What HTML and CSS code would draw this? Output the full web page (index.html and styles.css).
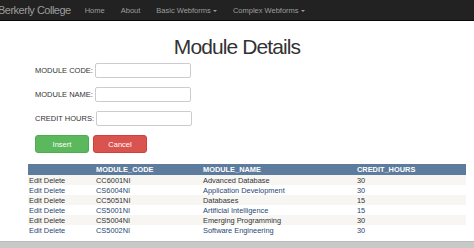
FILE: index.html
```html
<!DOCTYPE html>
<html lang="en">
<head>
    <meta charset="UTF-8">
    <meta name="viewport" content="width=device-width, initial-scale=1.0">
    <title>Module Details</title>
    <link rel="stylesheet" href="styles.css">
</head>
<body>

    <nav class="navbar">
        <span class="brand">Berkerly College</span>
        <a href="#">Home</a>
        <a href="#">About</a>
        <a href="#">Basic Webforms <span class="caret"></span></a>
        <a href="#">Complex Webforms <span class="caret"></span></a>
    </nav>

    <main>
        <h1>Module Details</h1>

        <form class="module-form">
            <div class="field">
                <label>MODULE CODE:</label>
                <input type="text">
            </div>
            <div class="field">
                <label>MODULE NAME:</label>
                <input type="text">
            </div>
            <div class="field">
                <label>CREDIT HOURS:</label>
                <input type="text">
            </div>
            <div class="buttons">
                <button type="button" class="btn insert">Insert</button>
                <button type="button" class="btn cancel">Cancel</button>
            </div>
        </form>

        <table class="grid">
            <thead>
                <tr>
                    <th></th>
                    <th>MODULE_CODE</th>
                    <th>MODULE_NAME</th>
                    <th>CREDIT_HOURS</th>
                </tr>
            </thead>
            <tbody>
                <tr><td><a>Edit</a> <a>Delete</a></td><td>CC6001NI</td><td>Advanced Database</td><td>30</td></tr>
                <tr><td><a>Edit</a> <a>Delete</a></td><td>CS6004NI</td><td>Application Development</td><td>30</td></tr>
                <tr><td><a>Edit</a> <a>Delete</a></td><td>CC5051NI</td><td>Databases</td><td>15</td></tr>
                <tr><td><a>Edit</a> <a>Delete</a></td><td>CS5001NI</td><td>Artificial Intelligence</td><td>15</td></tr>
                <tr><td><a>Edit</a> <a>Delete</a></td><td>CS5004NI</td><td>Emerging Programming</td><td>30</td></tr>
                <tr><td><a>Edit</a> <a>Delete</a></td><td>CS5002NI</td><td>Software Engineering</td><td>30</td></tr>
            </tbody>
        </table>
    </main>

    <footer class="bottom-bar"></footer>

</body>
</html>
```

FILE: styles.css
```css
body {
    margin: 0;
    font-family: "Liberation Sans", Arial, sans-serif;
    color: #333;
    background: #fff;
    height: 248px;
    overflow: hidden;
    display: flex;
    flex-direction: column;
}

.navbar {
    height: 20px;
    flex: none;
    background-color: #222;
    border-bottom: 1px solid #080808;
    display: flex;
    align-items: center;
    margin-left: -2px;
}

.navbar .brand {
    color: #9d9d9d;
    font-size: 11px;
    letter-spacing: -0.5px;
    margin-right: 14px;
}

.navbar a {
    color: #9d9d9d;
    font-size: 7.5px;
    text-decoration: none;
    margin-right: 16px;
}

.caret {
    display: inline-block;
    width: 0;
    height: 0;
    border-top: 2px solid #9d9d9d;
    border-left: 2px solid transparent;
    border-right: 2px solid transparent;
    vertical-align: middle;
}

main {
    flex: 1;
}

h1 {
    margin: 13px 0 0;
    font-size: 21px;
    letter-spacing: -0.9px;
    font-weight: normal;
    text-align: center;
    line-height: 26px;
}

.module-form {
    padding-left: 35px;
    margin-top: 3px;
}

.field {
    display: flex;
    align-items: center;
    height: 15px;
    margin-bottom: 9px;
}

.field label {
    font-size: 7.5px;
    color: #333;
    margin-right: 2px;
}

.field input {
    box-sizing: border-box;
    width: 96px;
    height: 15px;
    border: 1px solid #ccc;
    border-radius: 2px;
    padding: 0;
}

.buttons {
    display: flex;
    gap: 4px;
    margin-top: 1px;
}

.btn {
    width: 54px;
    height: 18px;
    border-radius: 3px;
    color: #fff;
    font-family: inherit;
    font-size: 7.5px;
    padding: 0;
}

.insert {
    background-color: #5cb85c;
    border: 1px solid #4cae4c;
}

.cancel {
    background-color: #d9534f;
    border: 1px solid #d43f3a;
}

.grid {
    margin: 11px 0 0 28px;
    width: 438px;
    border-collapse: collapse;
    font-size: 7.4px;
}

.grid th {
    background-color: #5d7b9d;
    color: #fff;
    text-align: left;
    font-weight: bold;
    height: 11px;
    padding: 0 1px;
}

.grid td {
    height: 10px;
    padding: 0 1px;
    color: #333;
}

.grid th:nth-child(1) { width: 65px; }
.grid th:nth-child(2) { width: 105px; }
.grid th:nth-child(3) { width: 152px; }

.grid tbody tr:nth-child(odd) {
    background-color: #f7f6f3;
}

.grid tbody tr:nth-child(even) {
    background-color: #fff;
}

.grid tbody tr:nth-child(even) td {
    color: #284775;
}

.grid a {
    color: inherit;
}

.bottom-bar {
    height: 6px;
    flex: none;
    background-color: #c8c8c8;
    border-top: 1px solid #bbb;
}
```
